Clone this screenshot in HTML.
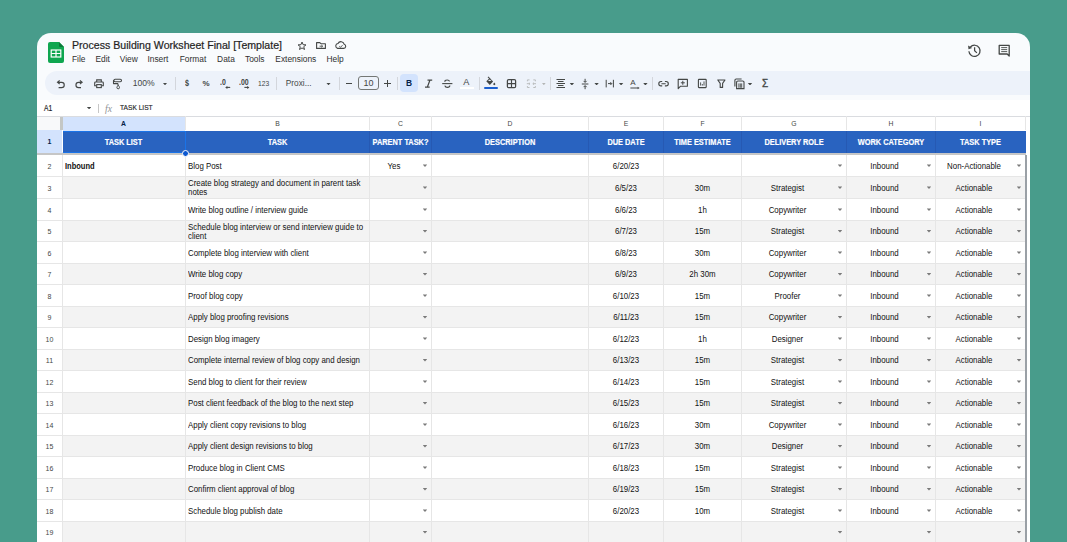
<!DOCTYPE html><html><head><meta charset="utf-8"><style>
*{box-sizing:border-box;margin:0;padding:0}
html,body{width:1067px;height:542px;overflow:hidden;background:#489c8b;font-family:"Liberation Sans",sans-serif;}
.a{position:absolute}
#win{position:absolute;left:37px;top:33px;width:993px;height:540px;background:#f9fbfd;border-radius:14px 14px 0 0;overflow:hidden}
.t{position:absolute;white-space:nowrap;line-height:1}
.ln{position:absolute;background:#e6e6e6}
.hd{position:absolute;color:#fff;font-weight:bold;font-size:7.4px;white-space:nowrap;line-height:1;text-align:center;transform:scaleY(1.15);-webkit-text-stroke:0.15px #fff}
.cl{position:absolute;font-size:8.4px;color:#111;white-space:nowrap;line-height:1;transform:scaleX(0.94);transform-origin:0 0}
.cc{transform-origin:50% 0}
.tri{position:absolute;clip-path:polygon(0 0,100% 0,50% 100%)}
.dd{position:absolute;width:4.6px;height:2.7px;background:#7a7a7a;clip-path:polygon(0 0,100% 0,50% 100%)}
.rn{position:absolute;font-size:7px;color:#444746;text-align:center;width:25px;left:37px;line-height:1}
.lt{position:absolute;font-size:6.8px;color:#444746;text-align:center;line-height:1;top:121.1px}
</style></head><body>
<div id="win"></div>
<div class="a" style="left:37px;top:100px;width:993px;height:16px;background:#fff"></div>
<div class="a" style="left:37px;top:116px;width:993px;height:426px;background:#fff"></div>
<div class="a" style="left:62px;top:177px;width:963px;height:21px;background:#f3f3f3"></div>
<div class="a" style="left:62px;top:221px;width:963px;height:20px;background:#f3f3f3"></div>
<div class="a" style="left:62px;top:264px;width:963px;height:20px;background:#f3f3f3"></div>
<div class="a" style="left:62px;top:307px;width:963px;height:20px;background:#f3f3f3"></div>
<div class="a" style="left:62px;top:350px;width:963px;height:20px;background:#f3f3f3"></div>
<div class="a" style="left:62px;top:393px;width:963px;height:20px;background:#f3f3f3"></div>
<div class="a" style="left:62px;top:436px;width:963px;height:20px;background:#f3f3f3"></div>
<div class="a" style="left:62px;top:479px;width:963px;height:20px;background:#f3f3f3"></div>
<div class="a" style="left:62px;top:522px;width:963px;height:20px;background:#f3f3f3"></div>
<div class="a" style="left:37px;top:117px;width:24px;height:13px;background:#f8f9fa"></div>
<div class="a" style="left:63px;top:117px;width:122px;height:14px;background:#d3e3fd"></div>
<div class="a" style="left:37px;top:130px;width:25px;height:23px;background:#d3e3fd"></div>
<div class="a" style="left:63px;top:131px;width:963px;height:22px;background:#2963c0"></div>
<div class="ln" style="left:37px;top:116px;width:993px;height:1px;background:#dadce0"></div>
<div class="ln" style="left:37px;top:176px;width:988px;height:1px"></div>
<div class="ln" style="left:37px;top:198px;width:988px;height:1px"></div>
<div class="ln" style="left:37px;top:220px;width:988px;height:1px"></div>
<div class="ln" style="left:37px;top:241px;width:988px;height:1px"></div>
<div class="ln" style="left:37px;top:263px;width:988px;height:1px"></div>
<div class="ln" style="left:37px;top:284px;width:988px;height:1px"></div>
<div class="ln" style="left:37px;top:306px;width:988px;height:1px"></div>
<div class="ln" style="left:37px;top:327px;width:988px;height:1px"></div>
<div class="ln" style="left:37px;top:349px;width:988px;height:1px"></div>
<div class="ln" style="left:37px;top:370px;width:988px;height:1px"></div>
<div class="ln" style="left:37px;top:392px;width:988px;height:1px"></div>
<div class="ln" style="left:37px;top:413px;width:988px;height:1px"></div>
<div class="ln" style="left:37px;top:435px;width:988px;height:1px"></div>
<div class="ln" style="left:37px;top:456px;width:988px;height:1px"></div>
<div class="ln" style="left:37px;top:478px;width:988px;height:1px"></div>
<div class="ln" style="left:37px;top:499px;width:988px;height:1px"></div>
<div class="ln" style="left:37px;top:521px;width:988px;height:1px"></div>
<div class="ln" style="left:37px;top:542px;width:988px;height:1px"></div>
<div class="ln" style="left:185px;top:116px;width:1px;height:14px"></div>
<div class="ln" style="left:185px;top:154px;width:1px;height:390px"></div>
<div class="ln" style="left:185px;top:131px;width:1px;height:22px;background:#2659b3"></div>
<div class="ln" style="left:369px;top:116px;width:1px;height:14px"></div>
<div class="ln" style="left:369px;top:154px;width:1px;height:390px"></div>
<div class="ln" style="left:369px;top:131px;width:1px;height:22px;background:#2659b3"></div>
<div class="ln" style="left:431px;top:116px;width:1px;height:14px"></div>
<div class="ln" style="left:431px;top:154px;width:1px;height:390px"></div>
<div class="ln" style="left:431px;top:131px;width:1px;height:22px;background:#2659b3"></div>
<div class="ln" style="left:588px;top:116px;width:1px;height:14px"></div>
<div class="ln" style="left:588px;top:154px;width:1px;height:390px"></div>
<div class="ln" style="left:588px;top:131px;width:1px;height:22px;background:#2659b3"></div>
<div class="ln" style="left:663px;top:116px;width:1px;height:14px"></div>
<div class="ln" style="left:663px;top:154px;width:1px;height:390px"></div>
<div class="ln" style="left:663px;top:131px;width:1px;height:22px;background:#2659b3"></div>
<div class="ln" style="left:741px;top:116px;width:1px;height:14px"></div>
<div class="ln" style="left:741px;top:154px;width:1px;height:390px"></div>
<div class="ln" style="left:741px;top:131px;width:1px;height:22px;background:#2659b3"></div>
<div class="ln" style="left:846px;top:116px;width:1px;height:14px"></div>
<div class="ln" style="left:846px;top:154px;width:1px;height:390px"></div>
<div class="ln" style="left:846px;top:131px;width:1px;height:22px;background:#2659b3"></div>
<div class="ln" style="left:935px;top:116px;width:1px;height:14px"></div>
<div class="ln" style="left:935px;top:154px;width:1px;height:390px"></div>
<div class="ln" style="left:935px;top:131px;width:1px;height:22px;background:#2659b3"></div>
<div class="ln" style="left:1025px;top:116px;width:1px;height:14px"></div>
<div class="ln" style="left:1025px;top:154px;width:1px;height:390px"></div>
<div class="ln" style="left:62px;top:152px;width:1px;height:390px"></div>
<div class="a" style="left:60px;top:117px;width:3px;height:13px;background:#c4c7c5"></div>
<div class="a" style="left:37px;top:153px;width:989px;height:2px;background:#c6c6c6"></div>
<div class="a" style="left:1025px;top:155px;width:2px;height:400px;background:#9aa0a6"></div>
<div class="a" style="left:63px;top:131px;width:123px;height:22px;border:1px solid #1a73e8;border-left:none"></div>
<div class="a" style="left:182px;top:150px;width:7px;height:7px;border-radius:50%;background:#0b57d0;border:1px solid #fff"></div>
<div class="lt" style="left:62px;width:123px;color:#041e49;font-weight:bold">A</div>
<div class="lt" style="left:186px;width:183px;">B</div>
<div class="lt" style="left:370px;width:61px;">C</div>
<div class="lt" style="left:432px;width:156px;">D</div>
<div class="lt" style="left:589px;width:74px;">E</div>
<div class="lt" style="left:664px;width:77px;">F</div>
<div class="lt" style="left:742px;width:104px;">G</div>
<div class="lt" style="left:847px;width:88px;">H</div>
<div class="lt" style="left:936px;width:89px;">I</div>
<div class="rn" style="top:138.0px;color:#041e49;font-weight:bold">1</div>
<div class="rn" style="top:162.5px;">2</div>
<div class="rn" style="top:184.5px;">3</div>
<div class="rn" style="top:206.5px;">4</div>
<div class="rn" style="top:228.0px;">5</div>
<div class="rn" style="top:249.5px;">6</div>
<div class="rn" style="top:271.0px;">7</div>
<div class="rn" style="top:292.5px;">8</div>
<div class="rn" style="top:314.0px;">9</div>
<div class="rn" style="top:335.5px;">10</div>
<div class="rn" style="top:357.0px;">11</div>
<div class="rn" style="top:378.5px;">12</div>
<div class="rn" style="top:400.0px;">13</div>
<div class="rn" style="top:421.5px;">14</div>
<div class="rn" style="top:443.0px;">15</div>
<div class="rn" style="top:464.5px;">16</div>
<div class="rn" style="top:486.0px;">17</div>
<div class="rn" style="top:507.5px;">18</div>
<div class="rn" style="top:529.0px;">19</div>
<div class="hd" style="left:62px;width:123px;top:138.7px">TASK LIST</div>
<div class="hd" style="left:186px;width:183px;top:138.7px">TASK</div>
<div class="hd" style="left:370px;width:61px;top:138.7px">PARENT TASK?</div>
<div class="hd" style="left:432px;width:156px;top:138.7px">DESCRIPTION</div>
<div class="hd" style="left:589px;width:74px;top:138.7px">DUE DATE</div>
<div class="hd" style="left:664px;width:77px;top:138.7px">TIME ESTIMATE</div>
<div class="hd" style="left:742px;width:104px;top:138.7px">DELIVERY ROLE</div>
<div class="hd" style="left:847px;width:88px;top:138.7px">WORK CATEGORY</div>
<div class="hd" style="left:936px;width:89px;top:138.7px">TASK TYPE</div>
<div class="cl" style="left:64.7px;top:161.9px;font-weight:bold;font-size:8.8px;transform:scaleX(0.855);">Inbound</div>
<div class="cl" style="left:187.5px;top:161.8px;">Blog Post</div>
<div class="dd" style="left:422.7px;top:164.4px"></div>
<div class="cl cc" style="left:370px;width:48px;text-align:center;top:161.8px">Yes</div>
<div class="cl cc" style="left:589px;width:74px;text-align:center;top:161.8px">6/20/23</div>
<div class="dd" style="left:837.7px;top:164.4px"></div>
<div class="dd" style="left:926.7px;top:164.4px"></div>
<div class="cl cc" style="left:847px;width:75px;text-align:center;top:161.8px">Inbound</div>
<div class="dd" style="left:1016.7px;top:164.4px"></div>
<div class="cl cc" style="left:936px;width:76px;text-align:center;top:161.8px">Non-Actionable</div>
<div class="cl" style="left:187.5px;top:179.0px;">Create blog strategy and document in parent task</div>
<div class="cl" style="left:187.5px;top:188.4px;">notes</div>
<div class="dd" style="left:422.7px;top:186.4px"></div>
<div class="cl cc" style="left:589px;width:74px;text-align:center;top:183.8px">6/5/23</div>
<div class="cl cc" style="left:664px;width:77px;text-align:center;top:183.8px">30m</div>
<div class="dd" style="left:837.7px;top:186.4px"></div>
<div class="cl cc" style="left:742px;width:91px;text-align:center;top:183.8px">Strategist</div>
<div class="dd" style="left:926.7px;top:186.4px"></div>
<div class="cl cc" style="left:847px;width:75px;text-align:center;top:183.8px">Inbound</div>
<div class="dd" style="left:1016.7px;top:186.4px"></div>
<div class="cl cc" style="left:936px;width:76px;text-align:center;top:183.8px">Actionable</div>
<div class="cl" style="left:187.5px;top:205.8px;">Write blog outline / interview guide</div>
<div class="dd" style="left:422.7px;top:208.4px"></div>
<div class="cl cc" style="left:589px;width:74px;text-align:center;top:205.8px">6/6/23</div>
<div class="cl cc" style="left:664px;width:77px;text-align:center;top:205.8px">1h</div>
<div class="dd" style="left:837.7px;top:208.4px"></div>
<div class="cl cc" style="left:742px;width:91px;text-align:center;top:205.8px">Copywriter</div>
<div class="dd" style="left:926.7px;top:208.4px"></div>
<div class="cl cc" style="left:847px;width:75px;text-align:center;top:205.8px">Inbound</div>
<div class="dd" style="left:1016.7px;top:208.4px"></div>
<div class="cl cc" style="left:936px;width:76px;text-align:center;top:205.8px">Actionable</div>
<div class="cl" style="left:187.5px;top:222.5px;">Schedule blog interview or send interview guide to</div>
<div class="cl" style="left:187.5px;top:231.9px;">client</div>
<div class="dd" style="left:422.7px;top:229.9px"></div>
<div class="cl cc" style="left:589px;width:74px;text-align:center;top:227.3px">6/7/23</div>
<div class="cl cc" style="left:664px;width:77px;text-align:center;top:227.3px">15m</div>
<div class="dd" style="left:837.7px;top:229.9px"></div>
<div class="cl cc" style="left:742px;width:91px;text-align:center;top:227.3px">Strategist</div>
<div class="dd" style="left:926.7px;top:229.9px"></div>
<div class="cl cc" style="left:847px;width:75px;text-align:center;top:227.3px">Inbound</div>
<div class="dd" style="left:1016.7px;top:229.9px"></div>
<div class="cl cc" style="left:936px;width:76px;text-align:center;top:227.3px">Actionable</div>
<div class="cl" style="left:187.5px;top:248.8px;">Complete blog interview with client</div>
<div class="dd" style="left:422.7px;top:251.4px"></div>
<div class="cl cc" style="left:589px;width:74px;text-align:center;top:248.8px">6/8/23</div>
<div class="cl cc" style="left:664px;width:77px;text-align:center;top:248.8px">30m</div>
<div class="dd" style="left:837.7px;top:251.4px"></div>
<div class="cl cc" style="left:742px;width:91px;text-align:center;top:248.8px">Copywriter</div>
<div class="dd" style="left:926.7px;top:251.4px"></div>
<div class="cl cc" style="left:847px;width:75px;text-align:center;top:248.8px">Inbound</div>
<div class="dd" style="left:1016.7px;top:251.4px"></div>
<div class="cl cc" style="left:936px;width:76px;text-align:center;top:248.8px">Actionable</div>
<div class="cl" style="left:187.5px;top:270.3px;">Write blog copy</div>
<div class="dd" style="left:422.7px;top:272.9px"></div>
<div class="cl cc" style="left:589px;width:74px;text-align:center;top:270.3px">6/9/23</div>
<div class="cl cc" style="left:664px;width:77px;text-align:center;top:270.3px">2h 30m</div>
<div class="dd" style="left:837.7px;top:272.9px"></div>
<div class="cl cc" style="left:742px;width:91px;text-align:center;top:270.3px">Copywriter</div>
<div class="dd" style="left:926.7px;top:272.9px"></div>
<div class="cl cc" style="left:847px;width:75px;text-align:center;top:270.3px">Inbound</div>
<div class="dd" style="left:1016.7px;top:272.9px"></div>
<div class="cl cc" style="left:936px;width:76px;text-align:center;top:270.3px">Actionable</div>
<div class="cl" style="left:187.5px;top:291.8px;">Proof blog copy</div>
<div class="dd" style="left:422.7px;top:294.4px"></div>
<div class="cl cc" style="left:589px;width:74px;text-align:center;top:291.8px">6/10/23</div>
<div class="cl cc" style="left:664px;width:77px;text-align:center;top:291.8px">15m</div>
<div class="dd" style="left:837.7px;top:294.4px"></div>
<div class="cl cc" style="left:742px;width:91px;text-align:center;top:291.8px">Proofer</div>
<div class="dd" style="left:926.7px;top:294.4px"></div>
<div class="cl cc" style="left:847px;width:75px;text-align:center;top:291.8px">Inbound</div>
<div class="dd" style="left:1016.7px;top:294.4px"></div>
<div class="cl cc" style="left:936px;width:76px;text-align:center;top:291.8px">Actionable</div>
<div class="cl" style="left:187.5px;top:313.3px;">Apply blog proofing revisions</div>
<div class="dd" style="left:422.7px;top:315.9px"></div>
<div class="cl cc" style="left:589px;width:74px;text-align:center;top:313.3px">6/11/23</div>
<div class="cl cc" style="left:664px;width:77px;text-align:center;top:313.3px">15m</div>
<div class="dd" style="left:837.7px;top:315.9px"></div>
<div class="cl cc" style="left:742px;width:91px;text-align:center;top:313.3px">Copywriter</div>
<div class="dd" style="left:926.7px;top:315.9px"></div>
<div class="cl cc" style="left:847px;width:75px;text-align:center;top:313.3px">Inbound</div>
<div class="dd" style="left:1016.7px;top:315.9px"></div>
<div class="cl cc" style="left:936px;width:76px;text-align:center;top:313.3px">Actionable</div>
<div class="cl" style="left:187.5px;top:334.8px;">Design blog imagery</div>
<div class="dd" style="left:422.7px;top:337.4px"></div>
<div class="cl cc" style="left:589px;width:74px;text-align:center;top:334.8px">6/12/23</div>
<div class="cl cc" style="left:664px;width:77px;text-align:center;top:334.8px">1h</div>
<div class="dd" style="left:837.7px;top:337.4px"></div>
<div class="cl cc" style="left:742px;width:91px;text-align:center;top:334.8px">Designer</div>
<div class="dd" style="left:926.7px;top:337.4px"></div>
<div class="cl cc" style="left:847px;width:75px;text-align:center;top:334.8px">Inbound</div>
<div class="dd" style="left:1016.7px;top:337.4px"></div>
<div class="cl cc" style="left:936px;width:76px;text-align:center;top:334.8px">Actionable</div>
<div class="cl" style="left:187.5px;top:356.3px;">Complete internal review of blog copy and design</div>
<div class="dd" style="left:422.7px;top:358.9px"></div>
<div class="cl cc" style="left:589px;width:74px;text-align:center;top:356.3px">6/13/23</div>
<div class="cl cc" style="left:664px;width:77px;text-align:center;top:356.3px">15m</div>
<div class="dd" style="left:837.7px;top:358.9px"></div>
<div class="cl cc" style="left:742px;width:91px;text-align:center;top:356.3px">Strategist</div>
<div class="dd" style="left:926.7px;top:358.9px"></div>
<div class="cl cc" style="left:847px;width:75px;text-align:center;top:356.3px">Inbound</div>
<div class="dd" style="left:1016.7px;top:358.9px"></div>
<div class="cl cc" style="left:936px;width:76px;text-align:center;top:356.3px">Actionable</div>
<div class="cl" style="left:187.5px;top:377.8px;">Send blog to client for their review</div>
<div class="dd" style="left:422.7px;top:380.4px"></div>
<div class="cl cc" style="left:589px;width:74px;text-align:center;top:377.8px">6/14/23</div>
<div class="cl cc" style="left:664px;width:77px;text-align:center;top:377.8px">15m</div>
<div class="dd" style="left:837.7px;top:380.4px"></div>
<div class="cl cc" style="left:742px;width:91px;text-align:center;top:377.8px">Strategist</div>
<div class="dd" style="left:926.7px;top:380.4px"></div>
<div class="cl cc" style="left:847px;width:75px;text-align:center;top:377.8px">Inbound</div>
<div class="dd" style="left:1016.7px;top:380.4px"></div>
<div class="cl cc" style="left:936px;width:76px;text-align:center;top:377.8px">Actionable</div>
<div class="cl" style="left:187.5px;top:399.3px;">Post client feedback of the blog to the next step</div>
<div class="dd" style="left:422.7px;top:401.9px"></div>
<div class="cl cc" style="left:589px;width:74px;text-align:center;top:399.3px">6/15/23</div>
<div class="cl cc" style="left:664px;width:77px;text-align:center;top:399.3px">15m</div>
<div class="dd" style="left:837.7px;top:401.9px"></div>
<div class="cl cc" style="left:742px;width:91px;text-align:center;top:399.3px">Strategist</div>
<div class="dd" style="left:926.7px;top:401.9px"></div>
<div class="cl cc" style="left:847px;width:75px;text-align:center;top:399.3px">Inbound</div>
<div class="dd" style="left:1016.7px;top:401.9px"></div>
<div class="cl cc" style="left:936px;width:76px;text-align:center;top:399.3px">Actionable</div>
<div class="cl" style="left:187.5px;top:420.8px;">Apply client copy revisions to blog</div>
<div class="dd" style="left:422.7px;top:423.4px"></div>
<div class="cl cc" style="left:589px;width:74px;text-align:center;top:420.8px">6/16/23</div>
<div class="cl cc" style="left:664px;width:77px;text-align:center;top:420.8px">30m</div>
<div class="dd" style="left:837.7px;top:423.4px"></div>
<div class="cl cc" style="left:742px;width:91px;text-align:center;top:420.8px">Copywriter</div>
<div class="dd" style="left:926.7px;top:423.4px"></div>
<div class="cl cc" style="left:847px;width:75px;text-align:center;top:420.8px">Inbound</div>
<div class="dd" style="left:1016.7px;top:423.4px"></div>
<div class="cl cc" style="left:936px;width:76px;text-align:center;top:420.8px">Actionable</div>
<div class="cl" style="left:187.5px;top:442.3px;">Apply client design revisions to blog</div>
<div class="dd" style="left:422.7px;top:444.9px"></div>
<div class="cl cc" style="left:589px;width:74px;text-align:center;top:442.3px">6/17/23</div>
<div class="cl cc" style="left:664px;width:77px;text-align:center;top:442.3px">30m</div>
<div class="dd" style="left:837.7px;top:444.9px"></div>
<div class="cl cc" style="left:742px;width:91px;text-align:center;top:442.3px">Designer</div>
<div class="dd" style="left:926.7px;top:444.9px"></div>
<div class="cl cc" style="left:847px;width:75px;text-align:center;top:442.3px">Inbound</div>
<div class="dd" style="left:1016.7px;top:444.9px"></div>
<div class="cl cc" style="left:936px;width:76px;text-align:center;top:442.3px">Actionable</div>
<div class="cl" style="left:187.5px;top:463.8px;">Produce blog in Client CMS</div>
<div class="dd" style="left:422.7px;top:466.4px"></div>
<div class="cl cc" style="left:589px;width:74px;text-align:center;top:463.8px">6/18/23</div>
<div class="cl cc" style="left:664px;width:77px;text-align:center;top:463.8px">15m</div>
<div class="dd" style="left:837.7px;top:466.4px"></div>
<div class="cl cc" style="left:742px;width:91px;text-align:center;top:463.8px">Strategist</div>
<div class="dd" style="left:926.7px;top:466.4px"></div>
<div class="cl cc" style="left:847px;width:75px;text-align:center;top:463.8px">Inbound</div>
<div class="dd" style="left:1016.7px;top:466.4px"></div>
<div class="cl cc" style="left:936px;width:76px;text-align:center;top:463.8px">Actionable</div>
<div class="cl" style="left:187.5px;top:485.3px;">Confirm client approval of blog</div>
<div class="dd" style="left:422.7px;top:487.9px"></div>
<div class="cl cc" style="left:589px;width:74px;text-align:center;top:485.3px">6/19/23</div>
<div class="cl cc" style="left:664px;width:77px;text-align:center;top:485.3px">15m</div>
<div class="dd" style="left:837.7px;top:487.9px"></div>
<div class="cl cc" style="left:742px;width:91px;text-align:center;top:485.3px">Strategist</div>
<div class="dd" style="left:926.7px;top:487.9px"></div>
<div class="cl cc" style="left:847px;width:75px;text-align:center;top:485.3px">Inbound</div>
<div class="dd" style="left:1016.7px;top:487.9px"></div>
<div class="cl cc" style="left:936px;width:76px;text-align:center;top:485.3px">Actionable</div>
<div class="cl" style="left:187.5px;top:506.8px;">Schedule blog publish date</div>
<div class="dd" style="left:422.7px;top:509.4px"></div>
<div class="cl cc" style="left:589px;width:74px;text-align:center;top:506.8px">6/20/23</div>
<div class="cl cc" style="left:664px;width:77px;text-align:center;top:506.8px">10m</div>
<div class="dd" style="left:837.7px;top:509.4px"></div>
<div class="cl cc" style="left:742px;width:91px;text-align:center;top:506.8px">Strategist</div>
<div class="dd" style="left:926.7px;top:509.4px"></div>
<div class="cl cc" style="left:847px;width:75px;text-align:center;top:506.8px">Inbound</div>
<div class="dd" style="left:1016.7px;top:509.4px"></div>
<div class="cl cc" style="left:936px;width:76px;text-align:center;top:506.8px">Actionable</div>
<div class="dd" style="left:422.7px;top:530.9px"></div>
<div class="dd" style="left:837.7px;top:530.9px"></div>
<div class="dd" style="left:926.7px;top:530.9px"></div>
<div class="dd" style="left:1016.7px;top:530.9px"></div>
<svg class="a" style="left:48px;top:42px" width="16" height="21" viewBox="0 0 16 21"><path d="M2 0H11L16 5V19A2 2 0 0 1 14 21H2A2 2 0 0 1 0 19V2A2 2 0 0 1 2 0Z" fill="#0fa650"/><path d="M11 0L16 5H12A1 1 0 0 1 11 4Z" fill="#0b7a3a"/><rect x="3.2" y="8" width="9.6" height="7" fill="none" stroke="#fff" stroke-width="1.2"/><path d="M3.2 11.5H12.8M8 8V15" stroke="#fff" stroke-width="1.2"/></svg>
<div class="t" style="left:72px;top:40.03px;font-size:10.6px;color:#1f1f1f;font-weight:normal;-webkit-text-stroke:0.2px #1f1f1f">Process Building Worksheet Final [Template]</div>
<svg class="a" style="left:296px;top:40px;" width="12" height="11" viewBox="296 40 12 11" fill="none" stroke="#444746" stroke-width="1.2"><path d="M302.02 42.00L303.10 44.70L305.98 44.88L303.73 46.68L304.54 49.47L302.02 47.94L299.50 49.47L300.31 46.68L298.06 44.88L300.94 44.70Z" stroke-linejoin="round" stroke-width="1.0"/></svg>
<svg class="a" style="left:315px;top:41px;" width="12" height="9" viewBox="315 41 12 9" fill="none" stroke="#444746" stroke-width="1.2"><path d="M316.6 42.6H319.8L320.9 43.7H325.4V48.4H316.6Z" stroke-linejoin="round" stroke-width="1.1"/><path d="M319.6 46.2H322.6M321.4 45.1L322.6 46.2L321.4 47.3" stroke-width="0.9"/></svg>
<svg class="a" style="left:334px;top:41px;" width="13" height="9" viewBox="334 41 13 9" fill="none" stroke="#444746" stroke-width="1.2"><path d="M337.6 48.4H343.8A2.1 2.1 0 0 0 344.2 44.3A3.3 3.3 0 0 0 338.0 43.5A2.5 2.5 0 0 0 337.6 48.4Z" stroke-linejoin="round" stroke-width="1.1"/><path d="M339.3 46.3L340.5 47.3L342.5 45.2" stroke-width="0.9"/></svg>
<div class="t" style="left:72.0px;top:55.49px;font-size:8.4px;color:#303030;font-weight:normal;">File</div>
<div class="t" style="left:95.4px;top:55.49px;font-size:8.4px;color:#303030;font-weight:normal;">Edit</div>
<div class="t" style="left:119.8px;top:55.49px;font-size:8.4px;color:#303030;font-weight:normal;">View</div>
<div class="t" style="left:147.4px;top:55.49px;font-size:8.4px;color:#303030;font-weight:normal;">Insert</div>
<div class="t" style="left:179.7px;top:55.49px;font-size:8.4px;color:#303030;font-weight:normal;">Format</div>
<div class="t" style="left:217.1px;top:55.49px;font-size:8.4px;color:#303030;font-weight:normal;">Data</div>
<div class="t" style="left:245.0px;top:55.49px;font-size:8.4px;color:#303030;font-weight:normal;">Tools</div>
<div class="t" style="left:275.3px;top:55.49px;font-size:8.4px;color:#303030;font-weight:normal;">Extensions</div>
<div class="t" style="left:326.5px;top:55.49px;font-size:8.4px;color:#303030;font-weight:normal;">Help</div>
<svg class="a" style="left:966px;top:42px;" width="17" height="16" viewBox="966 42 17 16" fill="none" stroke="#444746" stroke-width="1.2"><path d="M970.4 47.0A5.6 5.6 0 1 1 968.9 51.2" stroke-width="1.25"/><path d="M968.1 45.4L968.5 49.3L972.2 48.1Z" fill="#444746" stroke="none"/><path d="M974.6 47.2V50.8L976.9 52.9" stroke-width="1.25"/></svg>
<svg class="a" style="left:996px;top:43px;" width="16" height="15" viewBox="996 43 16 15" fill="none" stroke="#444746" stroke-width="1.2"><path d="M999.2 45.4H1009.2V56L1007.2 54H999.2Z" stroke-width="1.3" stroke-linejoin="round"/><path d="M1001.2 47.6H1007.2M1001.2 49.6H1007.2M1001.2 51.6H1007.2" stroke-width="0.9"/></svg>
<div class="a" style="left:45px;top:71px;width:985px;height:24px;border-radius:12px 0 0 12px;background:#edf2fa"></div>
<svg class="a" style="left:55px;top:79px;" width="11" height="10" viewBox="55 79 11 10" fill="none" stroke="#444746" stroke-width="1.2"><path d="M58 82.3H61.6A2.65 2.65 0 0 1 61.6 87.6H58.6" stroke-width="1.15"/><path d="M59.7 80.5L57.5 82.3L59.7 84.1" stroke-width="1.15"/></svg>
<svg class="a" style="left:74px;top:79px;" width="11" height="10" viewBox="74 79 11 10" fill="none" stroke="#444746" stroke-width="1.2"><path d="M81.4 82.3H78.6A2.65 2.65 0 0 0 78.6 87.6H81" stroke-width="1.15"/><path d="M79.9 80.5L82.1 82.3L79.9 84.1" stroke-width="1.15"/></svg>
<svg class="a" style="left:93px;top:78px;" width="12" height="11" viewBox="93 78 12 11" fill="none" stroke="#444746" stroke-width="1.2"><path d="M96.7 82V79.9H101.3V82" stroke-width="1.1"/><path d="M96.4 85.8H94.7V82.8A0.8 0.8 0 0 1 95.5 82H102.5A0.8 0.8 0 0 1 103.3 82.8V85.8H101.6" stroke-width="1.1"/><rect x="96.7" y="84.6" width="4.6" height="3" fill="#edf2fa" stroke-width="1.1"/></svg>
<svg class="a" style="left:112px;top:77px;" width="12" height="13" viewBox="112 77 12 13" fill="none" stroke="#444746" stroke-width="1.2"><rect x="113.9" y="79.3" width="7.6" height="2.4" rx="1.2" stroke-width="1.1"/><path d="M113.9 80.5H113.5V83.6H117.8L118.2 85.3" stroke-width="1.1" stroke-linejoin="round"/><path d="M118.2 85.2C117.4 86.2 116.9 86.9 116.9 87.5A1.3 1.3 0 0 0 119.5 87.5C119.5 86.9 119 86.2 118.2 85.2Z" stroke-width="1.0"/></svg>
<div class="t" style="left:132.7px;top:79.42px;font-size:8.6px;color:#444746;font-weight:normal;">100%</div>
<div class="tri" style="left:162.5px;top:82.6px;width:5.0px;height:2.6px;background:#444746"></div>
<div class="a" style="left:175px;top:77px;width:1px;height:13px;background:#d3d6dc"></div>
<div class="a" style="left:276px;top:77px;width:1px;height:13px;background:#d3d6dc"></div>
<div class="a" style="left:339px;top:77px;width:1px;height:13px;background:#d3d6dc"></div>
<div class="a" style="left:397px;top:77px;width:1px;height:13px;background:#d3d6dc"></div>
<div class="a" style="left:479px;top:77px;width:1px;height:13px;background:#d3d6dc"></div>
<div class="a" style="left:550px;top:77px;width:1px;height:13px;background:#d3d6dc"></div>
<div class="a" style="left:652px;top:77px;width:1px;height:13px;background:#d3d6dc"></div>
<div class="t" style="left:184.6px;top:78.47px;font-size:9.6px;color:#444746;font-weight:bold;transform:scaleX(0.75);transform-origin:0 0">$</div>
<div class="t" style="left:202.6px;top:79.63px;font-size:8.0px;color:#444746;font-weight:bold;">%</div>
<div class="t" style="left:220.2px;top:78.66px;font-size:8.2px;color:#444746;font-weight:bold;transform:scaleX(0.85);transform-origin:0 0">.0</div>
<svg class="a" style="left:222px;top:85px;" width="9" height="5" viewBox="222 85 9 5" fill="none" stroke="#444746" stroke-width="1.2"><path d="M230.2 87.4H226.5" stroke-width="1.1"/><path d="M225.2 87.4L227.4 85.9V88.9Z" fill="#444746" stroke="none"/></svg>
<div class="t" style="left:238.8px;top:78.66px;font-size:8.2px;color:#444746;font-weight:bold;transform:scaleX(0.85);transform-origin:0 0">.00</div>
<svg class="a" style="left:241px;top:85px;" width="10" height="5" viewBox="241 85 10 5" fill="none" stroke="#444746" stroke-width="1.2"><path d="M244.4 87.4H248" stroke-width="1.1"/><path d="M249.4 87.4L247.2 85.9V88.9Z" fill="#444746" stroke="none"/></svg>
<div class="t" style="left:258.0px;top:80.07px;font-size:7.6px;color:#444746;font-weight:normal;transform:scaleX(0.88);transform-origin:0 0">123</div>
<div class="t" style="left:285.8px;top:79.27px;font-size:8.3px;color:#444746;font-weight:normal;">Proxi...</div>
<div class="tri" style="left:326.0px;top:82.6px;width:5.0px;height:2.6px;background:#444746"></div>
<div class="a" style="left:346px;top:83px;width:6px;height:1.2px;background:#444746"></div>
<div class="a" style="left:358px;top:76px;width:21px;height:14px;border:1px solid #747775;border-radius:3px"></div>
<div class="t" style="left:358px;width:21px;text-align:center;top:79.28px;font-size:9px;color:#444746">10</div>
<div class="a" style="left:384px;top:82.9px;width:7px;height:1.2px;background:#444746"></div>
<div class="a" style="left:386.9px;top:80px;width:1.2px;height:7px;background:#444746"></div>
<div class="a" style="left:400px;top:74px;width:18px;height:18px;border-radius:4px;background:#d3e3fd"></div>
<div class="t" style="left:406px;top:79.49px;font-size:8.4px;color:#0b57d0;font-weight:bold;color:#041e49">B</div>
<svg class="a" style="left:424px;top:79px;" width="9" height="9" viewBox="424 79 9 9" fill="none" stroke="#444746" stroke-width="1.2"><path d="M427.5 80.2H432.2M425 87.2H429.7M429.9 80.2L427.3 87.2" stroke-width="1.2"/></svg>
<svg class="a" style="left:441px;top:78px;" width="13" height="11" viewBox="441 78 13 11" fill="none" stroke="#444746" stroke-width="1.2"><path d="M442.2 83.6H452.4" stroke-width="1.1"/><path d="M449.6 81.4C449.2 80.4 448.2 80 447.2 80C445.8 80 444.8 80.8 444.8 81.8M444.8 85.6C445.2 86.8 446.2 87.4 447.4 87.4C448.8 87.4 449.8 86.6 449.8 85.6" stroke-width="1.2"/></svg>
<div class="t" style="left:463.3px;top:78.21px;font-size:9.2px;color:#444746;font-weight:normal;">A</div>
<div class="a" style="left:460px;top:87px;width:14px;height:2px;background:#ffffff"></div>
<svg class="a" style="left:484px;top:76px;" width="16" height="14" viewBox="484 76 16 14" fill="none" stroke="#444746" stroke-width="1.2"><path d="M486.3 81.3L489.7 78.1L493.1 81.5L489.8 84.9Z" fill="#444746" stroke="none"/><path d="M487.9 81.0L489.7 79.4L491.5 81.1Z" fill="#edf2fa" stroke="none"/><path d="M488.0 76.9L490.0 78.9" stroke-width="1.1"/><path d="M494.3 82.6L495.4 84.1A1.1 1.1 0 0 1 493.2 84.1Z" fill="#444746" stroke="none"/></svg>
<div class="a" style="left:484.3px;top:87.1px;width:14px;height:1.8px;border-radius:1px;background:#1b5fcf"></div>
<svg class="a" style="left:506px;top:78px;" width="11" height="11" viewBox="506 78 11 11" fill="none" stroke="#444746" stroke-width="1.2"><rect x="507.4" y="79.6" width="8.2" height="8" rx="1.2" stroke-width="1.25"/><path d="M511.5 79.6V87.6M507.4 83.6H515.6" stroke-width="1.15"/></svg>
<svg class="a" style="left:525px;top:78px;" width="13" height="11" viewBox="525 78 13 11" fill="none" stroke="#444746" stroke-width="1.2"><path d="M527.4 81.3V79.9H529.5M527.4 86.1V87.5H529.5M533.3 79.9H535.4V81.3M533.3 87.5H535.4V86.1M526.8 83.7H529.8M528.9 82.7L530 83.7L528.9 84.7M536 83.7H533M533.9 82.7L532.8 83.7L533.9 84.7" stroke="#b9bcbd" stroke-width="1"/></svg>
<div class="tri" style="left:541.8px;top:82.8px;width:4.0px;height:2.4px;background:#b4b6b6"></div>
<svg class="a" style="left:555px;top:78px;" width="11" height="11" viewBox="555 78 11 11" fill="none" stroke="#444746" stroke-width="1.2"><path d="M556.5 79.5H565M558 81.5H563.5M556.5 83.5H565M558 85.5H563.5M556.5 87.5H565" stroke-width="1"/></svg>
<div class="tri" style="left:569.3px;top:82.6px;width:5.2px;height:2.9px;background:#444746"></div>
<svg class="a" style="left:581px;top:78px;" width="9" height="12" viewBox="581 78 9 12" fill="none" stroke="#444746" stroke-width="1.2"><path d="M581.8 84H588.4M585.1 78.8V82.2M585.1 85.8V89.2M583.6 80.9L585.1 82.4L586.6 80.9M583.6 87.1L585.1 85.6L586.6 87.1" stroke-width="1"/></svg>
<div class="tri" style="left:594.0px;top:82.6px;width:5.2px;height:2.9px;background:#444746"></div>
<svg class="a" style="left:605px;top:78px;" width="10" height="11" viewBox="605 78 10 11" fill="none" stroke="#444746" stroke-width="1.2"><path d="M606.2 79.8V87.4M613.4 79.8V87.4M608 83.6H611.6M610.4 82.2L611.8 83.6L610.4 85" stroke-width="1"/></svg>
<div class="tri" style="left:618.5px;top:82.6px;width:5.2px;height:2.9px;background:#444746"></div>
<div class="t" style="left:630.2px;top:79.43px;font-size:8px;color:#444746;font-weight:normal;">A</div>
<svg class="a" style="left:629px;top:85px;" width="12" height="5" viewBox="629 85 12 5" fill="none" stroke="#444746" stroke-width="1.2"><path d="M630.4 88H638.2" stroke-width="1"/><path d="M639.6 88L637.6 86.8V89.2Z" fill="#444746" stroke="none"/></svg>
<div class="tri" style="left:642.8px;top:82.6px;width:5.2px;height:2.9px;background:#444746"></div>
<svg class="a" style="left:657px;top:79px;" width="13" height="9" viewBox="657 79 13 9" fill="none" stroke="#444746" stroke-width="1.2"><path d="M662.2 81.5H661A2.2 2.2 0 0 0 661 85.9H662.2M664.9 81.5H666.1A2.2 2.2 0 0 1 666.1 85.9H664.9M661.4 83.7H665.7" stroke-width="1.15"/></svg>
<svg class="a" style="left:677px;top:78px;" width="12" height="12" viewBox="677 78 12 12" fill="none" stroke="#444746" stroke-width="1.2"><path d="M678.2 79.4H687.4V86.2H680.6L678.2 88.6Z" stroke-width="1.1" stroke-linejoin="round"/><path d="M682.8 80.8V84.8M680.8 82.8H684.8" stroke-width="1"/></svg>
<svg class="a" style="left:697px;top:78px;" width="11" height="11" viewBox="697 78 11 11" fill="none" stroke="#444746" stroke-width="1.2"><rect x="698.4" y="79.4" width="7.8" height="8.2" rx="0.6" stroke-width="1.1"/><path d="M700.6 82.4V85.6M702.3 84V85.6M704 81.4V85.6" stroke-width="0.9"/></svg>
<svg class="a" style="left:716px;top:78px;" width="11" height="11" viewBox="716 78 11 11" fill="none" stroke="#444746" stroke-width="1.2"><path d="M717.8 80H725L722.6 83.4V87.4H720.2V83.4Z" stroke-width="1.1" stroke-linejoin="round"/></svg>
<svg class="a" style="left:733px;top:77px;" width="13" height="13" viewBox="733 77 13 13" fill="none" stroke="#444746" stroke-width="1.2"><path d="M734.9 86.6V80.3A1.3 1.3 0 0 1 736.2 79H741.6" stroke-width="1.1"/><path d="M736.6 82.3A1.3 1.3 0 0 1 737.9 81H742.7A1.3 1.3 0 0 1 744 82.3V88.6H736.6Z" stroke-width="1.1"/><path d="M738.9 83.4V87.8M740.3 83.4V87.8M741.7 83.4V87.8" stroke-width="0.9"/></svg>
<div class="tri" style="left:747.4px;top:82.6px;width:5.2px;height:2.9px;background:#444746"></div>
<div class="t" style="left:762.0px;top:78.94px;font-size:10px;color:#444746;font-weight:normal;-webkit-text-stroke:0.3px #444746">&Sigma;</div>
<div class="t" style="left:44px;top:103.99px;font-size:8.4px;color:#1f1f1f;font-weight:normal;transform:scaleX(0.8);transform-origin:0 0;-webkit-text-stroke:0.2px #1f1f1f">A1</div>
<div class="tri" style="left:86.8px;top:107.0px;width:4.6px;height:2.3px;background:#444746"></div>
<div class="a" style="left:98px;top:103.5px;width:1px;height:9.5px;background:#c7c7c7"></div>
<div class="t" style="left:105.0px;top:103.67px;font-size:9.6px;color:#8e9296;font-weight:normal;font-family:'Liberation Serif',serif;font-style:italic">fx</div>
<div class="t" style="left:120.3px;top:104.10px;font-size:7.8px;color:#1f1f1f;font-weight:normal;transform:scaleX(0.85);transform-origin:0 0;-webkit-text-stroke:0.15px #1f1f1f">TASK LIST</div>
</body></html>
